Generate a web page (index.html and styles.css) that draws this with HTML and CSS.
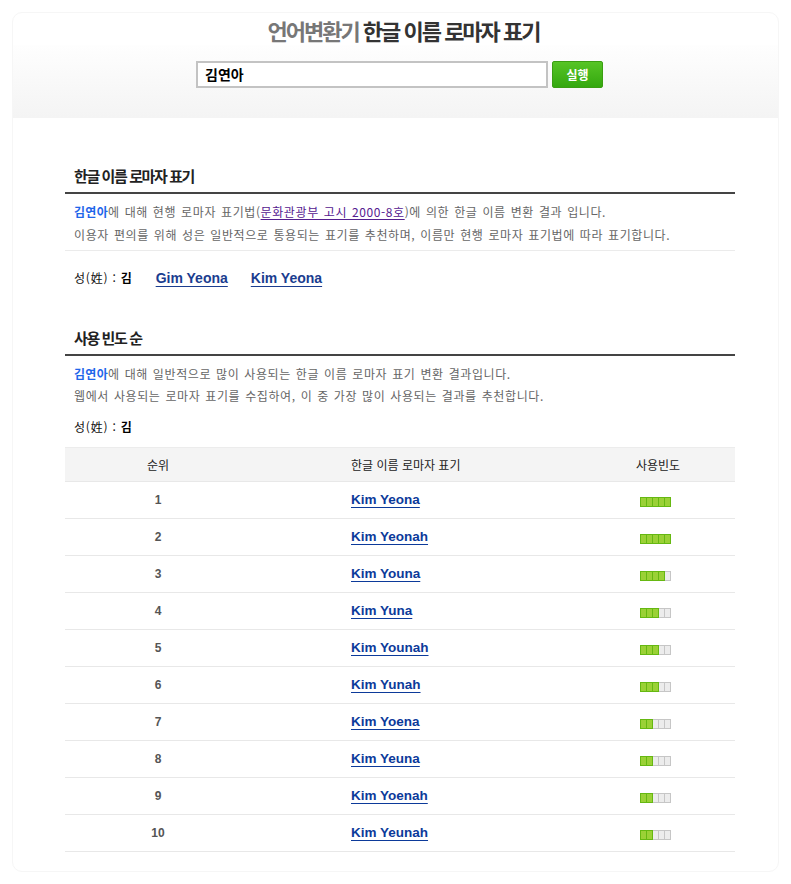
FILE: index.html
```html
<!DOCTYPE html>
<html lang="ko">
<head>
<meta charset="utf-8">
<title>언어변환기 한글 이름 로마자 표기</title>
<link rel="stylesheet" href="styles.css">
</head>
<body>
<div class="page">
  <h1 class="title"><span class="title-sub">언어변환기</span> 한글 이름 로마자 표기</h1>
  <div class="search">
    <div class="search-box">김연아</div>
    <button class="search-btn" type="button">실행</button>
  </div>

  <div class="content">
    <section class="sec sec-first">
      <h2 class="sec-title">한글 이름 로마자 표기</h2>
      <div class="desc desc-ruled">
        <p><b class="hl">김연아</b>에 대해 현행 로마자 표기법(<a class="law" href="#">문화관광부 고시 2000-8호</a>)에 의한 한글 이름 변환 결과 입니다.</p>
        <p>이용자 편의를 위해 성은 일반적으로 통용되는 표기를 추천하며, 이름만 현행 로마자 표기법에 따라 표기합니다.</p>
      </div>
      <div class="surname">성(姓) : <b>김</b><a class="rom" href="#">Gim Yeona</a><a class="rom" href="#">Kim Yeona</a></div>
    </section>

    <section class="sec sec-second">
      <h2 class="sec-title">사용 빈도 순</h2>
      <div class="desc desc-plain">
        <p><b class="hl">김연아</b>에 대해 일반적으로 많이 사용되는 한글 이름 로마자 표기 변환 결과입니다.</p>
        <p>웹에서 사용되는 로마자 표기를 수집하여, 이 중 가장 많이 사용되는 결과를 추천합니다.</p>
      </div>
      <div class="surname surname-2">성(姓) : <b>김</b></div>

      <div class="table">
        <div class="row head">
          <div class="c1">순위</div><div class="c2">한글 이름 로마자 표기</div><div class="c3">사용빈도</div>
        </div>
        <div class="row"><div class="c1 rank">1</div><div class="c2"><a class="name" href="#">Kim Yeona</a></div><div class="c3"><span class="bar"><i class="on"></i><i class="on"></i><i class="on"></i><i class="on"></i><i class="on"></i></span></div></div>
        <div class="row"><div class="c1 rank">2</div><div class="c2"><a class="name" href="#">Kim Yeonah</a></div><div class="c3"><span class="bar"><i class="on"></i><i class="on"></i><i class="on"></i><i class="on"></i><i class="on"></i></span></div></div>
        <div class="row"><div class="c1 rank">3</div><div class="c2"><a class="name" href="#">Kim Youna</a></div><div class="c3"><span class="bar"><i class="on"></i><i class="on"></i><i class="on"></i><i class="on"></i><i></i></span></div></div>
        <div class="row"><div class="c1 rank">4</div><div class="c2"><a class="name" href="#">Kim Yuna</a></div><div class="c3"><span class="bar"><i class="on"></i><i class="on"></i><i class="on"></i><i></i><i></i></span></div></div>
        <div class="row"><div class="c1 rank">5</div><div class="c2"><a class="name" href="#">Kim Younah</a></div><div class="c3"><span class="bar"><i class="on"></i><i class="on"></i><i class="on"></i><i></i><i></i></span></div></div>
        <div class="row"><div class="c1 rank">6</div><div class="c2"><a class="name" href="#">Kim Yunah</a></div><div class="c3"><span class="bar"><i class="on"></i><i class="on"></i><i class="on"></i><i></i><i></i></span></div></div>
        <div class="row"><div class="c1 rank">7</div><div class="c2"><a class="name" href="#">Kim Yoena</a></div><div class="c3"><span class="bar"><i class="on"></i><i class="on"></i><i></i><i></i><i></i></span></div></div>
        <div class="row"><div class="c1 rank">8</div><div class="c2"><a class="name" href="#">Kim Yeuna</a></div><div class="c3"><span class="bar"><i class="on"></i><i class="on"></i><i></i><i></i><i></i></span></div></div>
        <div class="row"><div class="c1 rank">9</div><div class="c2"><a class="name" href="#">Kim Yoenah</a></div><div class="c3"><span class="bar"><i class="on"></i><i class="on"></i><i></i><i></i><i></i></span></div></div>
        <div class="row"><div class="c1 rank">10</div><div class="c2"><a class="name" href="#">Kim Yeunah</a></div><div class="c3"><span class="bar"><i class="on"></i><i class="on"></i><i></i><i></i><i></i></span></div></div>
      </div>
    </section>
  </div>
</div>
</body>
</html>
```

FILE: styles.css
```css
* { box-sizing: border-box; }
html, body { margin: 0; padding: 0; background: #fff; }
body {
  font-family: "Noto Sans CJK KR", "Noto Sans", sans-serif;
  font-size: 12px;
  color: #333;
}
.page {
  margin: 12px;
  height: 860px;
  border: 1px solid #f6f6f6;
  border-radius: 10px;
  overflow: hidden;
}
.title {
  margin: 0;
  padding-top: 2px;
  height: 32px;
  line-height: 30px;
  text-align: center;
  font-size: 22px;
  font-weight: 700;
  letter-spacing: -2px;
  color: #333;
  padding-left: 16px;
}
.title-sub { color: #777; }
.search {
  height: 73px;
  padding-top: 16px;
  padding-left: 8px;
  display: flex;
  justify-content: center;
  gap: 4px;
  background: linear-gradient(#fefefe, #f4f4f4);
}
.search-box {
  width: 352px;
  height: 27px;
  border: 2px solid #c3c3c3;
  background: #fff;
  padding-left: 7px;
  font-size: 14px;
  font-weight: 700;
  line-height: 23px;
  color: #000;
}
.search-btn {
  width: 51px;
  height: 27px;
  border: 1px solid #3a9e12;
  border-radius: 2px;
  background: linear-gradient(#56c425, #34a80f);
  color: #fff;
  font-family: "Noto Sans CJK KR", sans-serif;
  font-size: 12px;
  font-weight: 700;
  padding: 0;
}
.content {
  margin-left: 52px;
  width: 670px;
}
.sec-first { margin-top: 48px; }
.sec-second { margin-top: 40px; }
.sec-title {
  margin: 0;
  padding: 0 0 6px 9px;
  line-height: 20px;
  font-size: 15px;
  font-weight: 700;
  letter-spacing: -1.4px;
  color: #222;
  border-bottom: 2px solid #444;
}
.desc p { margin: 0; }
.desc {
  padding-left: 9px;
  color: #666;
  letter-spacing: 0.6px;
  word-spacing: 1px;
}
.desc-ruled {
  padding-top: 6px;
  padding-bottom: 4px;
  line-height: 23px;
  border-bottom: 1px solid #ebebeb;
}
.desc-plain {
  padding-top: 7px;
  line-height: 22px;
}
.hl { color: #1f66ea; letter-spacing: 0.3px; }
.law { color: #55208f; text-decoration: underline; text-underline-offset: 2px; }
.surname {
  margin-top: 17px;
  padding-left: 9px;
  line-height: 20px;
  color: #111;
  letter-spacing: 0.8px;
}
.surname b { color: #000; }
.surname-2 { margin-top: 10px; }
.rom {
  margin-left: 23px;
  font-family: "Liberation Sans", Arial, sans-serif;
  font-size: 14px;
  font-weight: 700;
  letter-spacing: 0;
  color: #1b3d8f;
  text-decoration: underline;
  text-underline-offset: 3px;
}
.table {
  margin-top: 10px;
}
.row {
  display: grid;
  grid-template-columns: 186px 326px 158px;
  align-items: center;
  height: 37px;
  border-bottom: 1px solid #e8e8e8;
}
.row.head {
  height: 35px;
  background: #f4f4f4;
  border-top: 1px solid #ececec;
  color: #222;
}
.c1 { text-align: center; }
.c2 { padding-left: 100px; }
.row .c2 { padding-bottom: 4px; }
.row.head .c2 { padding-bottom: 0; }
.c3 { text-align: center; }
.row.head .c3 { padding-left: 4px; }
.rank {
  font-family: "Liberation Sans", Arial, sans-serif;
  font-weight: 700;
  font-size: 12px;
  color: #555;
}
.name {
  font-family: "Liberation Sans", Arial, sans-serif;
  font-size: 13.5px;
  font-weight: 700;
  color: #0c3a9a;
  text-decoration: underline;
  text-underline-offset: 3px;
}
.bar {
  display: inline-flex;
  vertical-align: middle;
  margin-left: -1px;
}
.bar i {
  display: block;
  width: 7px;
  height: 10px;
  margin-right: -1px;
  border: 1px solid #c6c6c6;
  background: #ececec;
}
.bar i:last-child { margin-right: 0; }
.bar i.on {
  position: relative;
  z-index: 1;
  border-color: #66b812;
  background: #9ad136;
}
```
